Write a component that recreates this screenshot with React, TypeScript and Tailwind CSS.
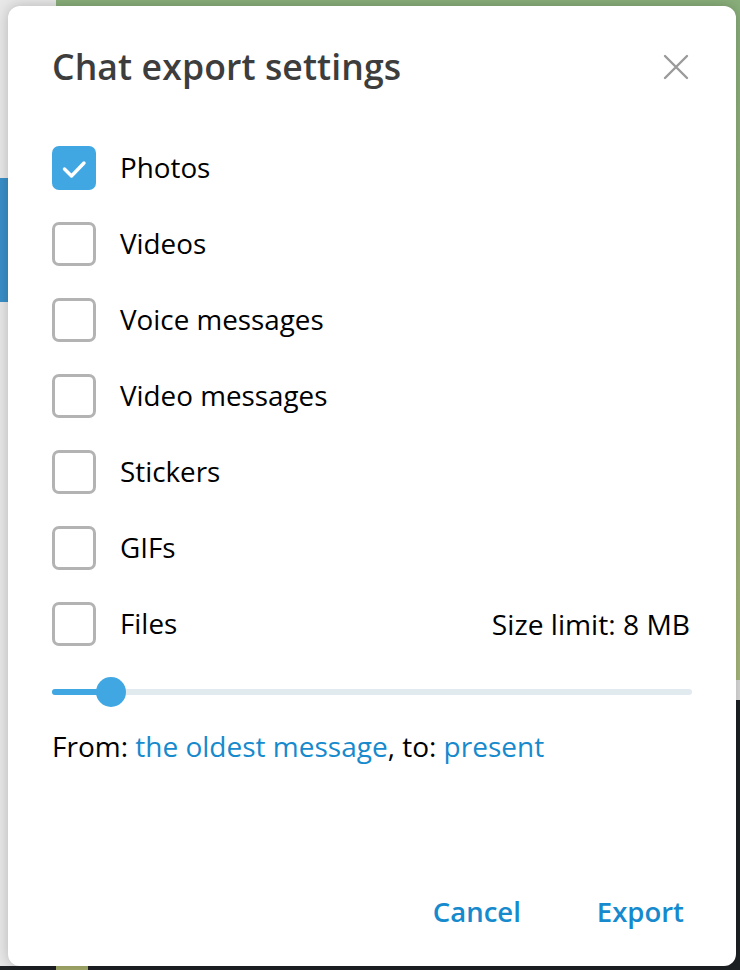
import React, { useState } from 'react';

// --- DATA ---
const OPTIONS = ['Photos', 'Videos', 'Voice messages', 'Video messages', 'Stickers', 'GIFs', 'Files'];

// --- UI Pieces ---
const CheckBox: React.FC<{ checked: boolean }> = ({ checked }) =>
  checked ? (
    <div className="w-[44px] h-[44px] rounded-[7px] bg-[#40a7e3] flex items-center justify-center shrink-0">
      <svg width="44" height="44" viewBox="0 0 44 44" fill="none">
        <polyline points="12.5,23 19.5,30 32,17" stroke="white" strokeWidth="3.4" strokeLinecap="round" strokeLinejoin="round" />
      </svg>
    </div>
  ) : (
    <div className="w-[44px] h-[44px] rounded-[7px] border-[3px] border-[#b3b3b3] bg-white shrink-0"></div>
  );

const CloseIcon: React.FC = () => (
  <svg width="26" height="26" viewBox="0 0 26 26" fill="none">
    <path d="M2 2L24 24M24 2L2 24" stroke="#9a9a9a" strokeWidth="2.4" strokeLinecap="round" />
  </svg>
);

// --- MAIN COMPONENT ---
const App: React.FC = () => {
  const [checked, setChecked] = useState<Record<string, boolean>>({ Photos: true });

  return (
    <div className="relative w-[740px] h-[970px] overflow-hidden bg-[#1e2124]" style={{ fontFamily: '"Open Sans", "Noto Sans", sans-serif' }}>
      {/* app behind the dialog */}
      <div className="absolute left-0 top-0 w-[56px] h-[966px] bg-[#e8e8e8]"></div>
      <div className="absolute left-0 top-[178px] w-[10px] h-[124px] bg-[#3a8fc8]"></div>
      <div className="absolute left-[56px] top-0 w-[684px] h-[680px] bg-gradient-to-b from-[#8aaf7b] to-[#a9b97b]"></div>
      <div className="absolute left-[56px] top-[680px] w-[684px] h-[20px] bg-[#dcdcdc]"></div>
      <div className="absolute left-[56px] top-[960px] w-[32px] h-[10px] bg-[#a7ad6b]"></div>

      {/* dialog */}
      <div className="relative ml-[8px] mt-[6px] w-[728px] h-[960px] bg-white rounded-[12px] shadow-[0_0_14px_rgba(0,0,0,0.22)] flex flex-col">
        <header className="h-[124px] flex items-center justify-between pl-[44px] pr-[47px] pb-[2px]">
          <h2 className="text-[35.6px] font-semibold text-[#3d3d3d] tracking-[0.1px]">Chat export settings</h2>
          <button type="button" className="p-0">
            <CloseIcon />
          </button>
        </header>

        <div className="px-[44px] flex flex-col">
          {OPTIONS.map((opt) => (
            <div
              key={opt}
              className="h-[76px] flex items-center cursor-pointer"
              onClick={() => setChecked((c) => ({ ...c, [opt]: !c[opt] }))}
            >
              <CheckBox checked={!!checked[opt]} />
              <span className="ml-[24px] text-[27.8px] text-black">{opt}</span>
              {opt === 'Files' && <span className="ml-auto mr-[2px] text-[28.2px] text-black">Size limit: 8 MB</span>}
            </div>
          ))}

          <div className="h-[60px] flex items-center">
            <div className="relative w-full h-[6px] rounded-full bg-[#e1ebef]">
              <div className="absolute left-0 top-0 h-[6px] w-[59px] rounded-full bg-[#40a7e3]"></div>
              <div className="absolute left-[44px] top-[-12px] w-[30px] h-[30px] rounded-full bg-[#40a7e3]"></div>
            </div>
          </div>

          <p className="h-[48px] flex items-center text-[28px] text-black">
            From:&nbsp;<span className="text-[#168acd]">the oldest message</span>, to:&nbsp;
            <span className="text-[#168acd]">present</span>
          </p>
        </div>

        <footer className="mt-auto pb-[30px] pr-[52px] flex justify-end gap-[76px]">
          <button type="button" className="h-[48px] text-[27.5px] font-semibold text-[#168acd]">Cancel</button>
          <button type="button" className="h-[48px] text-[27.5px] font-semibold text-[#168acd]">Export</button>
        </footer>
      </div>
    </div>
  );
};

export default App;
